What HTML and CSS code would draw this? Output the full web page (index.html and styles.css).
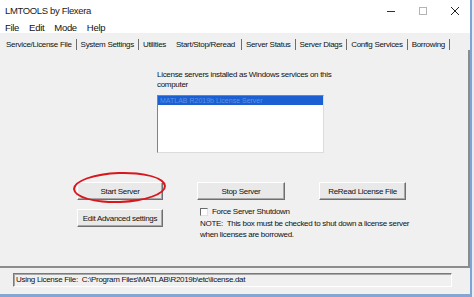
FILE: index.html
```html
<!DOCTYPE html>
<html lang="en">
<head>
    <meta charset="UTF-8">
    <title>LMTOOLS by Flexera</title>
    <link rel="stylesheet" href="styles.css">
</head>
<body>
    <div class="window">
        <div class="titlebar">
            <span class="title">LMTOOLS by Flexera</span>
            <div class="controls">
                <svg width="10" height="10" viewBox="0 0 10 10"><line x1="1" y1="5.5" x2="9" y2="5.5" stroke="#333" stroke-width="1"/></svg>
                <svg width="10" height="10" viewBox="0 0 10 10"><rect x="1.5" y="1.5" width="7" height="7" fill="none" stroke="#b4b4b4" stroke-width="1"/></svg>
                <svg width="10" height="10" viewBox="0 0 10 10"><path d="M1 1L9 9M9 1L1 9" stroke="#222" stroke-width="1"/></svg>
            </div>
        </div>
        <div class="menubar">
            <span class="menu-item">File</span>
            <span class="menu-item">Edit</span>
            <span class="menu-item">Mode</span>
            <span class="menu-item">Help</span>
        </div>
        <div class="tabs">
            <span class="tab">Service/License File</span>
            <span class="tab">System Settings</span>
            <span class="tab no-sep">Utilities</span>
            <span class="tab active">Start/Stop/Reread</span>
            <span class="tab">Server Status</span>
            <span class="tab">Server Diags</span>
            <span class="tab">Config Services</span>
            <span class="tab">Borrowing</span>
        </div>
        <div class="panel">
            <div class="services">
                <p class="services-label">License servers installed as Windows services on this<br>computer</p>
                <div class="listbox">
                    <div class="list-item selected">MATLAB R2019b License Server</div>
                </div>
            </div>
            <div class="actions">
                <div class="btn-wrap">
                    <button class="btn">Start Server</button>
                    <span class="ring"></span>
                </div>
                <button class="btn">Stop Server</button>
                <button class="btn">ReRead License File</button>
                <button class="btn edit">Edit Advanced settings</button>
                <div class="force">
                    <label class="check-row"><span class="checkbox"></span>Force Server Shutdown</label>
                    <p class="note">NOTE:&nbsp; This box must be checked to shut down a license server<br>when licenses are borrowed.</p>
                </div>
            </div>
        </div>
        <div class="statusbar">
            <div class="status-field">Using License File:&nbsp; C:\Program Files\MATLAB\R2019b\etc\license.dat</div>
        </div>
    </div>
</body>
</html>
```

FILE: styles.css
```css
* {
    box-sizing: border-box;
}
body {
    margin: 0;
    width: 474px;
    height: 297px;
    overflow: hidden;
    background: #e6ecf4;
    font-family: "Liberation Sans", Arial, sans-serif;
    font-size: 8px;
    letter-spacing: -0.3px;
    color: #111;
}
.window {
    width: 472px;
    height: 297px;
    background: #f0f0f0;
    border-right: 2px solid #7ea3d4;
    border-bottom: 3px solid #86a6d2;
    display: flex;
    flex-direction: column;
}
.titlebar {
    height: 21px;
    background: #fff;
    display: flex;
    align-items: center;
    justify-content: space-between;
    padding-left: 5px;
}
.title {
    font-size: 9.5px;
    letter-spacing: -0.35px;
    color: #1a1a1a;
}
.controls {
    display: flex;
    gap: 22px;
    padding-right: 10px;
}
.controls svg {
    display: block;
}
.menubar {
    height: 12px;
    background: #fff;
    display: flex;
    align-items: center;
    padding-left: 5px;
    font-size: 9.5px;
    letter-spacing: -0.3px;
}
.menu-item {
    margin-right: 10px;
}
.tabs {
    height: 17px;
    padding: 6px 0 0 2px;
    display: flex;
}
.tab {
    padding: 0 4px;
    height: 11px;
    line-height: 11px;
    border-right: 1px solid #6d6d6d;
    white-space: nowrap;
}
.tab.no-sep {
    border-right: 0;
}
.tab.active {
    padding: 0 6px;
}
.panel {
    height: 218px;
    padding-top: 20px;
    border-right: 2px solid #8c8c8c;
    border-bottom: 2px solid #8c8c8c;
}
.services {
    margin-left: 157px;
}
.services-label {
    margin: 0;
    line-height: 10px;
    white-space: nowrap;
}
.listbox {
    margin-top: 5px;
    width: 167px;
    height: 58px;
    background: #fff;
    border: 1px solid;
    border-color: #828282 #dcdcdc #dcdcdc #828282;
}
.list-item {
    height: 9px;
    line-height: 9px;
    padding-left: 2px;
    font-size: 7px;
    letter-spacing: 0;
}
.list-item.selected {
    background: #1b5fd2;
    color: #5e92e4;
}
.actions {
    margin: 29px 0 0 77px;
    display: grid;
    grid-template-columns: 86px 88px 87px;
    column-gap: 34px;
    row-gap: 7px;
    align-items: start;
}
.btn {
    height: 18px;
    width: 100%;
    padding: 0;
    font: inherit;
    letter-spacing: inherit;
    color: #111;
    background: #e9e9e9;
    border: 1px solid;
    border-color: #fff #6f6f6f #6f6f6f #fff;
    box-shadow: inset -1px -1px #a8a8a8;
}
.btn.edit {
    margin-top: 2px;
}
.btn-wrap {
    position: relative;
}
.btn-wrap .btn {
    display: block;
}
.ring {
    position: absolute;
    left: -4px;
    top: -10px;
    width: 93px;
    height: 31px;
    border: 2.5px solid #d8161b;
    border-radius: 50%;
    transform: rotate(-2deg);
    pointer-events: none;
}
.force {
    grid-column: 2 / 4;
}
.check-row {
    display: flex;
    align-items: center;
    gap: 4px;
    height: 9px;
    margin-left: 3px;
}
.checkbox {
    width: 8px;
    height: 8px;
    background: #fff;
    border: 1px solid;
    border-color: #6a6a6a #e0e0e0 #e0e0e0 #6a6a6a;
}
.note {
    margin: 2px 0 0 3px;
    line-height: 11px;
    white-space: nowrap;
}
.statusbar {
    flex: 1;
    padding: 5px 0 0 13px;
}
.status-field {
    width: 439px;
    height: 14px;
    line-height: 12px;
    padding-left: 2px;
    border: 1px solid;
    border-color: #7a7a7a #fff #fff #7a7a7a;
    box-shadow: inset 1px 1px #a8a8a8;
    white-space: nowrap;
}
```
